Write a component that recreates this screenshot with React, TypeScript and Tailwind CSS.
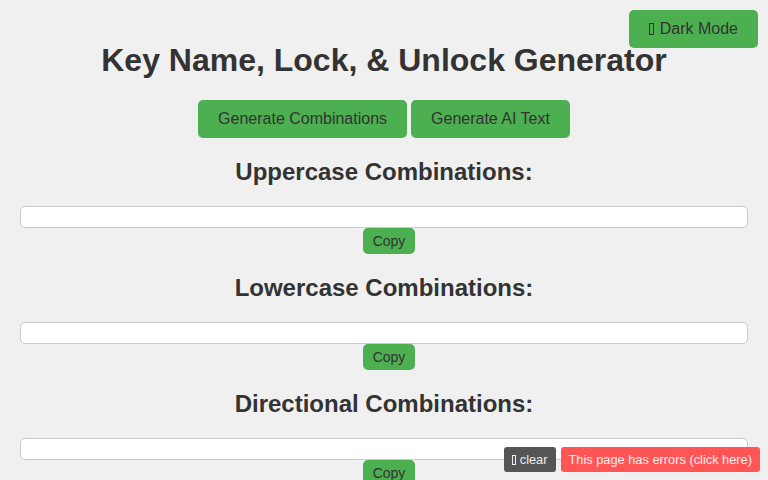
const sections = ["Uppercase", "Lowercase", "Directional"];

// missing-glyph box, as the icon font failed to load in the original
function Tofu({ className = "" }: { className?: string }) {
  return <span className={`inline-block border border-current align-[-1px] ${className}`} />;
}

export default function App() {
  return (
    <div className="min-h-screen bg-[#f0f0f0] text-[#333] p-5 text-center font-['Liberation_Sans',Arial,sans-serif]">
      {/* dark mode toggle */}
      <button className="fixed top-[10px] right-[10px] bg-[#4CAF50] text-[#333] text-base leading-[18px] px-5 py-[10px] rounded-[5px]">
        <Tofu className="w-[5px] h-[12px] mr-[6px]" />Dark Mode
      </button>

      <h1 className="text-[32px] font-bold leading-[37px] mt-[22px] mb-[21px]">
        Key Name, Lock, &amp; Unlock Generator
      </h1>

      <div className="flex justify-center gap-1">
        <button className="bg-[#4CAF50] text-[#333] text-base leading-[18px] px-5 py-[10px] rounded-[5px]">
          Generate Combinations
        </button>
        <button className="bg-[#4CAF50] text-[#333] text-base leading-[18px] px-5 py-[10px] rounded-[5px]">
          Generate AI Text
        </button>
      </div>

      {sections.map((name) => (
        <div key={name}>
          <h2 className="text-2xl font-bold leading-[28px] mt-5 mb-5">{name} Combinations:</h2>
          <textarea
            rows={1}
            readOnly
            className="block w-full h-[22px] bg-white border border-[#ccc] rounded-[5px] resize-none"
          />
          <button className="ml-[10px] bg-[#4CAF50] text-[#333] text-sm leading-4 px-[10px] py-[5px] rounded-[5px]">
            Copy
          </button>
        </div>
      ))}

      {/* error overlay */}
      <div className="fixed bottom-2 right-2 flex gap-[5px] text-[12.8px] leading-[15px]">
        <button className="bg-[#555] text-white/90 px-2 py-[5px] rounded-[3px]">
          <Tofu className="w-[4px] h-[10px] mr-[4px]" />clear
        </button>
        <button className="bg-[#ff5555] text-white/90 px-2 py-[5px] rounded-[3px]">
          This page has errors (click here)
        </button>
      </div>
    </div>
  );
}
